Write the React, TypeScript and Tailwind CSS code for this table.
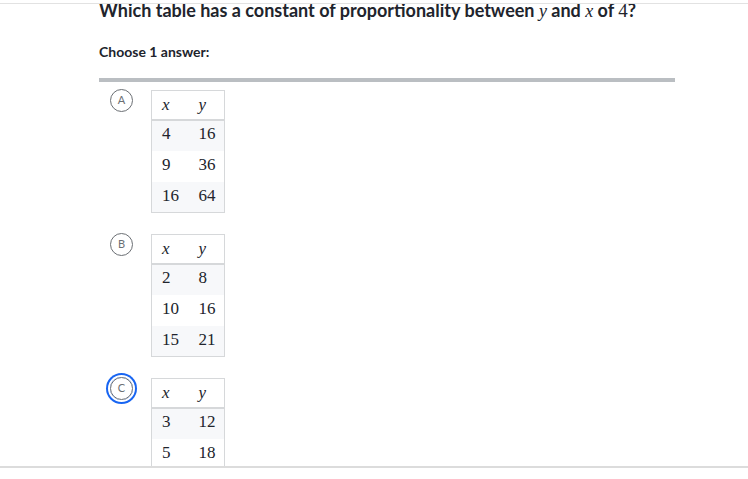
import React from 'react';

type Row = [string, string];

interface OptionProps {
  letter: string;
  rows: Row[];
  selected?: boolean;
}

const serif = { fontFamily: '"Liberation Serif", "DejaVu Serif", serif' };

const ValueTable: React.FC<{ rows: Row[] }> = ({ rows }) => (
  <table className="border border-[#d6d8da] border-collapse text-[17px] text-[#21242c]" style={serif}>
    <thead>
      <tr className="h-[29px] border-b-2 border-[#d6d8da]">
        <th className="w-[37px] pl-[10px] pb-[1px] text-left font-normal italic">x</th>
        <th className="w-[36px] pl-[10px] pb-[1px] text-left font-normal italic">y</th>
      </tr>
    </thead>
    <tbody>
      {rows.map((r, i) => (
        <tr key={i} className={i % 2 === 0 ? 'h-[31px] bg-[#f7f8fa]' : 'h-[31px] bg-white'}>
          <td className="pl-[10px] pb-[3px]">{r[0]}</td>
          <td className="pl-[10px] pb-[3px]">{r[1]}</td>
        </tr>
      ))}
    </tbody>
  </table>
);

const Option: React.FC<OptionProps> = ({ letter, rows, selected }) => (
  <div className="flex items-start">
    <div className="w-[52px] pl-[11px]">
      <div
        className={
          selected
            ? 'w-[23px] h-[23px] -mt-[1px] rounded-full border-[1.5px] border-[#6b6f74] flex items-center justify-center text-[11px] text-[#6b6f74] ring-2 ring-[#1865f2] ring-offset-2'
            : 'w-[23px] h-[23px] -mt-[1px] rounded-full border-[1.5px] border-[#6b6f74] flex items-center justify-center text-[11px] text-[#6b6f74]'
        }
      >
        {letter}
      </div>
    </div>
    <ValueTable rows={rows} />
  </div>
);

export default function App() {
  return (
    <div className="w-[748px] h-[479px] bg-white overflow-hidden" style={{ fontFamily: 'Lato, "Noto Sans", sans-serif' }}>
      <div className="h-[3px]" />
      <div className="h-[463px] border-t border-[#e2e2e2] overflow-hidden">
        <div className="ml-[99px] w-[576px] -mt-[6px]">
          <h1 className="text-[18px] leading-[24px] font-bold text-[#21242c]">
            Which table has a constant of proportionality between{' '}
            <span className="italic font-normal" style={serif}>y</span> and{' '}
            <span className="italic font-normal" style={serif}>x</span> of{' '}
            <span className="font-normal text-[19px]" style={serif}>4</span>?
          </h1>
          <p className="mt-[20px] text-[14px] leading-[18px] font-bold text-[#21242c]">Choose 1 answer:</p>
          <div className="mt-[17px] h-[4px] bg-[#babec2]" />
          <div className="mt-[8px] flex flex-col gap-[21px]">
            <Option letter="A" rows={[['4', '16'], ['9', '36'], ['16', '64']]} />
            <Option letter="B" rows={[['2', '8'], ['10', '16'], ['15', '21']]} />
            <Option letter="C" rows={[['3', '12'], ['5', '18'], ['7', '28']]} selected />
          </div>
        </div>
      </div>
      <div className="border-t-2 border-[#dcdcdc]" />
    </div>
  );
}
